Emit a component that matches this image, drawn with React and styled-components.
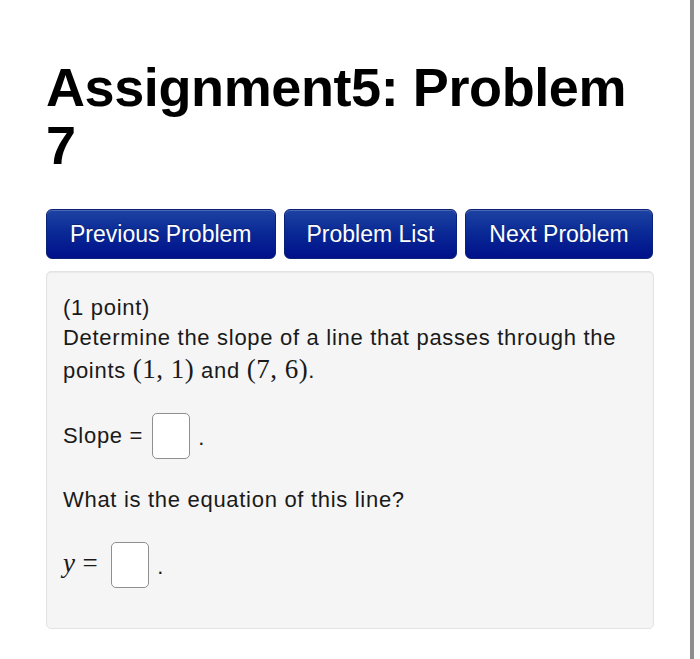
import React from 'react'
import styled, { createGlobalStyle } from 'styled-components'

const GlobalStyle = createGlobalStyle`
    html, body {
        margin: 0;
        padding: 0;
        background: #fbfbfb;
    }
    body {
        font-family: "Liberation Sans", Arial, sans-serif;
        color: #222;
    }
`;

const Page = styled.div`
    width: 694px;
    min-height: 659px;
    box-sizing: border-box;
    background: #ffffff;
    border-right: 4px solid #8d8d8d;
    padding: 58px 0 0 46px;
`;

const Content = styled.div`
    width: 608px;
`;

const Title = styled.h1`
    margin: 0;
    font-size: 54px;
    line-height: 58px;
    font-weight: 700;
    color: #000;
    letter-spacing: -0.4px;
`;

const Nav = styled.div`
    display: flex;
    gap: 8px;
    margin-top: 35px;
`;

const NavButton = styled.button`
    height: 50px;
    padding: 0 ${props => props.pad || 23}px;
    border: 1px solid #0a2178;
    border-radius: 6px;
    background: linear-gradient(to bottom, #1d43a2 0%, #0a2a96 45%, #00108a 100%);
    color: #ffffff;
    font-family: "Liberation Sans", Arial, sans-serif;
    font-size: 23px;
    text-shadow: 0 -1px 0 rgba(0, 0, 0, 0.25);
    box-shadow: inset 0 1px 0 rgba(255, 255, 255, 0.2);
    cursor: pointer;
`;

const Well = styled.div`
    margin-top: 12px;
    padding: 21px 16px 40px;
    background: #f5f5f5;
    border: 1px solid #e3e3e3;
    border-radius: 5px;
    box-shadow: inset 0 1px 1px rgba(0, 0, 0, 0.05);
    font-size: 22px;
    letter-spacing: 0.7px;
    line-height: 30px;
    color: #1a1a1a;
`;

const Text = styled.div`
    margin-top: ${props => props.top || 0}px;
    line-height: ${props => props.lh || 30}px;
    white-space: nowrap;
`;

const Math = styled.span`
    font-family: "Liberation Serif", "Times New Roman", serif;
    font-size: 27px;
    line-height: 27px;
    letter-spacing: 0.5px;
    font-style: ${props => props.italic ? 'italic' : 'normal'};
    margin-right: ${props => props.after || 0}px;
`;

const AnswerRow = styled.div`
    display: flex;
    align-items: center;
    margin-top: ${props => props.top || 0}px;
    height: 46px;
`;

const Label = styled.span`
    margin-right: ${props => props.gap || 14}px;
`;

const AnswerBox = styled.span`
    display: inline-block;
    width: 36px;
    height: 44px;
    background: #ffffff;
    border: 1px solid #8f8f8f;
    border-radius: 5px;
`;

const Dot = styled.span`
    margin-left: 8px;
    position: relative;
    top: 2px;
`;

const App = () => {
    return (
        <>
            <GlobalStyle />
            <Page>
                <Content>
                    <Title>Assignment5: Problem 7</Title>
                    <Nav>
                        <NavButton pad={23}>Previous Problem</NavButton>
                        <NavButton pad={22}>Problem List</NavButton>
                        <NavButton pad={23}>Next Problem</NavButton>
                    </Nav>
                    <Well>
                        <Text>(1 point)</Text>
                        <Text>Determine the slope of a line that passes through the</Text>
                        <Text lh={36}>
                            <span>points </span>
                            <Math>(1, 1)</Math>
                            <span> and </span>
                            <Math>(7, 6)</Math>
                            <span>.</span>
                        </Text>
                        <AnswerRow top={24}>
                            <Label gap={9}>Slope =</Label>
                            <AnswerBox />
                            <Dot>.</Dot>
                        </AnswerRow>
                        <Text top={26}>What is the equation of this line?</Text>
                        <AnswerRow top={27}>
                            <Label gap={13}>
                                <Math italic after={7}>y</Math><Math>=</Math>
                            </Label>
                            <AnswerBox />
                            <Dot>.</Dot>
                        </AnswerRow>
                    </Well>
                </Content>
            </Page>
        </>
    )
}

export default App
